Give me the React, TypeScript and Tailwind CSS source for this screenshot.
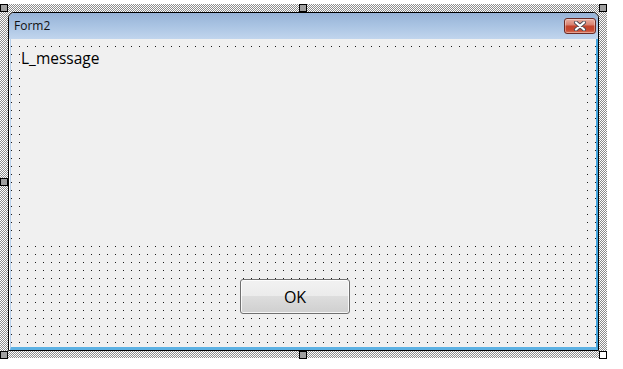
import React from "react";

// designer grab handles sit over the hatched selection frame
function Handle({ className, active }: { className: string; active?: boolean }) {
  return (
    <div
      className={`absolute w-[8px] h-[8px] border border-black ${
        active ? "bg-white" : "bg-[#a0a0a0]"
      } ${className}`}
    />
  );
}

function CloseButton() {
  return (
    <div className="w-[32px] h-[16px] rounded-[3px] border border-[#6b2a24] bg-[linear-gradient(180deg,#eab0a2_0%,#d98372_40%,#c2442c_52%,#c6472f_78%,#d9745a_100%)] flex items-center justify-center shadow-[inset_0_0_0_1px_rgba(255,255,255,0.35)]">
      <svg width="14" height="10" viewBox="0 0 14 10">
        <path d="M3 1.5 L11 8.5 M11 1.5 L3 8.5" stroke="#4b4b55" strokeWidth="4" strokeLinecap="round" />
        <path d="M3 1.5 L11 8.5 M11 1.5 L3 8.5" stroke="#ffffff" strokeWidth="2.2" strokeLinecap="round" />
      </svg>
    </div>
  );
}

export default function App() {
  return (
    <div className="relative w-[623px] h-[369px] bg-white font-['Open_Sans',sans-serif] overflow-hidden">
      <div className="mt-[4px] w-[607px] h-[354px] pt-[8px] pl-[8px] pr-[8px] pb-[7px] bg-[conic-gradient(#8c8c8c_25%,#ffffff_0_50%,#8c8c8c_0_75%,#ffffff_0)] bg-[length:2px_2px]">
        {/* form window */}
        <div className="w-[591px] h-[339px] border border-black rounded-t-[6px] bg-white flex flex-col overflow-hidden">
          <div className="h-[26px] shrink-0 flex items-center justify-between pl-[5px] pr-[2px] rounded-t-[5px] bg-[linear-gradient(180deg,#97b3d7_0%,#aac4e3_50%,#c1d5ed_100%)]">
            <span className="text-[12px] leading-none text-[#111111]">Form2</span>
            <CloseButton />
          </div>
          <div className="flex-1 border-l border-white">
            <div className="h-full border-l border-[#b7cfea] border-r-2 border-r-[#42a4dd] border-b-[3px] border-b-[#5cb1e3]">
              <div className="h-full bg-[#f0f0f0] bg-[conic-gradient(from_270deg_at_1px_1px,#1a1a1a_25%,transparent_0)] bg-[length:8px_8px] bg-[position:0px_-1px] flex flex-col">
                <div className="ml-[9px] mt-[8px] w-[566px] h-[196px] bg-[#f0f0f0] pl-[1px] pt-[1px] text-[15.5px] leading-[20px] text-black">
                  L_message
                </div>
                <button
                  type="button"
                  className="ml-[229px] mt-[36px] w-[110px] h-[35px] rounded-[3px] border border-[#707070] bg-[linear-gradient(180deg,#f2f2f2_0%,#ebebeb_50%,#dddddd_50%,#cfcfcf_100%)] shadow-[inset_0_0_0_1px_rgba(255,255,255,0.8)] text-[16px] leading-none text-black"
                >
                  OK
                </button>
              </div>
            </div>
          </div>
        </div>
      </div>

      <Handle className="left-[0px] top-[4px]" />
      <Handle className="left-[299px] top-[4px]" />
      <Handle className="left-[599px] top-[4px]" />
      <Handle className="left-[0px] top-[178px]" />
      <Handle className="left-[0px] top-[351px]" />
      <Handle className="left-[299px] top-[351px]" />
      <Handle className="left-[599px] top-[351px]" active />
    </div>
  );
}
